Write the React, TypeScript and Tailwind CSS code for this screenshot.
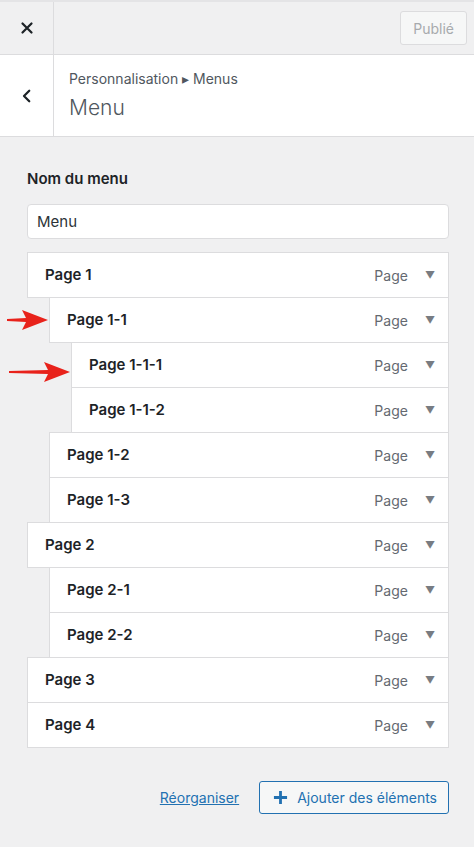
import React from "react";

type MenuItem = {
  title: string;
  depth: number;
};

const items: MenuItem[] = [
  { title: "Page 1", depth: 0 },
  { title: "Page 1-1", depth: 1 },
  { title: "Page 1-1-1", depth: 2 },
  { title: "Page 1-1-2", depth: 2 },
  { title: "Page 1-2", depth: 1 },
  { title: "Page 1-3", depth: 1 },
  { title: "Page 2", depth: 0 },
  { title: "Page 2-1", depth: 1 },
  { title: "Page 2-2", depth: 1 },
  { title: "Page 3", depth: 0 },
  { title: "Page 4", depth: 0 },
];

const indent = ["ml-0", "ml-[22px]", "ml-[44px]"];

function CloseIcon() {
  return (
    <svg viewBox="0 0 24 24" className="h-[18px] w-[18px]" fill="none" stroke="#1d2327" strokeWidth="3" strokeLinecap="round">
      <path d="M6 6l12 12M18 6L6 18" />
    </svg>
  );
}

function BackIcon() {
  return (
    <svg viewBox="0 0 24 24" className="h-[18px] w-[18px]" fill="none" stroke="#1d2327" strokeWidth="3" strokeLinecap="round" strokeLinejoin="round">
      <path d="M15 5l-7 7 7 7" />
    </svg>
  );
}

function RedArrow({ width }: { width: number }) {
  return (
    <svg width={width} height="26" viewBox={`0 0 ${width} 26`}>
      <path d={`M0 12 L${width - 22} 11 L${width - 26} 3 L${width} 13 L${width - 26} 23 L${width - 22} 15 L0 14 Z`} fill="#e8221b" />
    </svg>
  );
}

function MenuRow({ item }: { item: MenuItem }) {
  return (
    <div className={`${indent[item.depth]} -mt-px flex h-[46px] items-center border border-[#dcdcde] bg-white pl-[17px] pr-[13px]`}>
      <span className="flex-1 text-[15px] font-semibold text-[#1d2327]">{item.title}</span>
      <span className="mr-[17px] text-[14px] text-[#646970]">Page</span>
      <span className="text-[10px] text-[#787c82]">▼</span>
    </div>
  );
}

export default function App() {
  return (
    <div className="relative min-h-[847px] w-full bg-[#f0f0f1] font-['Inter',sans-serif] text-[#1d2327]">
      <div className="flex h-[54px] border-t-2 border-[#e4e4e6]">
        <div className="flex w-[54px] items-center justify-center border-r border-[#dcdcde]">
          <CloseIcon />
        </div>
        <div className="flex flex-1 items-center justify-end pr-[7px]">
          <button type="button" disabled className="h-[34px] rounded-[3px] border border-[#dcdcde] bg-[#f6f7f7] px-[12px] text-[14px] text-[#a7aaad]">
            Publié
          </button>
        </div>
      </div>

      <div className="flex h-[83px] border-y border-[#dcdcde] bg-white">
        <div className="flex w-[54px] items-center justify-center border-r border-[#dcdcde]">
          <BackIcon />
        </div>
        <div className="flex flex-col pl-[15px] pt-[14px]">
          <span className="text-[14px] leading-[20px] text-[#50575e]">Personnalisation ▸ Menus</span>
          <span className="mt-[5px] text-[21px] font-light leading-[28px] text-[#50575e]">Menu</span>
        </div>
      </div>

      <div className="pl-[27px] pr-[25px] pt-[31px]">
        <div className="text-[15px] font-semibold leading-[22px]">Nom du menu</div>
        <input
          readOnly
          value="Menu"
          className="mt-[14px] h-[35px] w-full rounded-[4px] border border-[#dcdcde] bg-white px-[9px] text-[15px] text-[#2c3338] outline-none"
        />

        <div className="mt-[14px]">
          {items.map((item) => (
            <MenuRow key={item.title} item={item} />
          ))}
        </div>

        <div className="mt-[33px] flex items-center justify-end gap-[20px]">
          <a href="#" className="text-[14px] text-[#2271b1] underline">Réorganiser</a>
          <button type="button" className="flex h-[33px] items-center gap-[9px] rounded-[3px] border border-[#2271b1] bg-[#f6f7f7] pl-[13px] pr-[11px] text-[14px] text-[#2271b1]">
            <svg viewBox="0 0 16 16" className="h-[15px] w-[15px]" fill="none" stroke="#2271b1" strokeWidth="3">
              <path d="M8 1v14M1 8h14" />
            </svg>
            Ajouter des éléments
          </button>
        </div>
      </div>

      <div className="absolute left-[7px] top-[307px]">
        <RedArrow width={41} />
      </div>
      <div className="absolute left-[9px] top-[359px]">
        <RedArrow width={61} />
      </div>
    </div>
  );
}
